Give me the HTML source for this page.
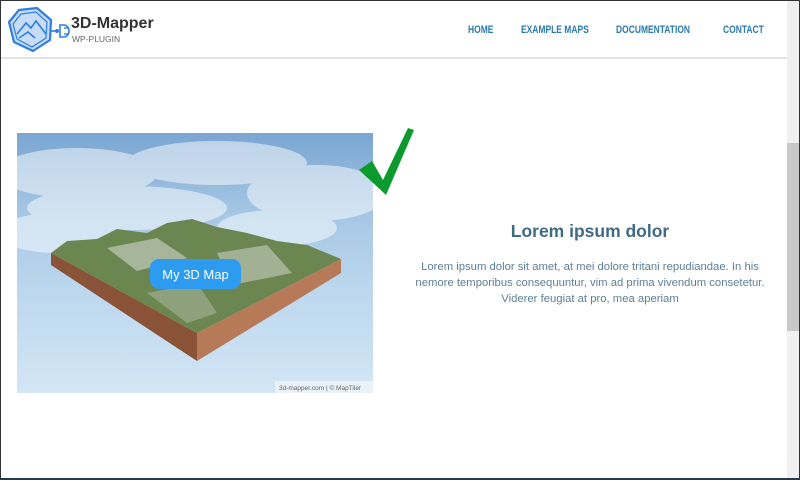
<!DOCTYPE html>
<html><head><meta charset="utf-8"><style>
*{margin:0;padding:0;box-sizing:border-box}
html,body{width:800px;height:480px;overflow:hidden;background:#fff;font-family:"Liberation Sans",sans-serif}
.frame{position:absolute;inset:0;border:1px solid #333;border-bottom:2px solid #2b3a4a}
.header{position:absolute;left:1px;top:1px;width:786px;height:58px;border-bottom:2px solid #e2e2e2;background:#fff}
.nav a{position:absolute;top:23px;font-size:11px;font-weight:bold;color:#2a7ab0;text-decoration:none;transform:scaleX(0.77);transform-origin:left;white-space:nowrap}
.sb{position:absolute;left:787px;top:1px;width:12px;height:477px;background:#f0f0f0}
.thumb{position:absolute;left:787px;top:143px;width:12px;height:188px;background:#c8c8c8}
.img{position:absolute;left:17px;top:133px;width:356px;height:260px;overflow:hidden;
background:linear-gradient(180deg,#7aa6d2 0%,#a4c6e4 30%,#bcd7ee 60%,#d3e6f5 100%)}
h2{position:absolute;left:400px;width:380px;top:221px;text-align:center;font-size:17.5px;font-weight:bold;color:#3f6a86}
p{position:absolute;left:405px;width:370px;top:259px;text-align:center;font-size:11.3px;line-height:16px;color:#5c7f96}
</style></head><body>
<div class="header">
<svg style="position:absolute;left:6px;top:6px" width="64" height="46" viewBox="0 0 64 46">
<polygon points="12,3 30,1 44,13 43,33 26,44 7,35 2,15" fill="#c6dbf5" stroke="#2e7fe0" stroke-width="2.2" stroke-linejoin="round"/>
<polygon points="14,7 29,5 40,15 39,31 25,40 10,32 6,17" fill="none" stroke="#2e7fe0" stroke-width="1.2"/>
<path d="M10,27 L19,16 L24,21 L29,14 L39,27 M12,31 L21,25 L28,31" fill="none" stroke="#2e7fe0" stroke-width="1.6"/>
<line x1="43" y1="24" x2="50" y2="24" stroke="#2e7fe0" stroke-width="1.6"/>
<circle cx="50" cy="24" r="2" fill="#2e7fe0"/>
<path d="M53,18 h4 a5,6 0 0 1 0,12 h-4 z" fill="none" stroke="#2e7fe0" stroke-width="1.6"/>
<line x1="57" y1="21" x2="62" y2="21" stroke="#2e7fe0" stroke-width="1.4"/>
<line x1="57" y1="27" x2="62" y2="27" stroke="#2e7fe0" stroke-width="1.4"/>
</svg>
<div style="position:absolute;left:70px;top:14px;font-size:16px;font-weight:bold;color:#333">3D-Mapper</div>
<div style="position:absolute;left:71px;top:33px;font-size:8.5px;color:#666">WP-PLUGIN</div>
<div class="nav">
<a style="left:467px">HOME</a>
<a style="left:520px">EXAMPLE MAPS</a>
<a style="left:615px">DOCUMENTATION</a>
<a style="left:722px">CONTACT</a>
</div>
</div>
<div class="sb"></div><div class="thumb"></div>
<div class="img">
<svg width="356" height="260" viewBox="0 0 356 260">
<g fill="#fff" opacity="0.5">
<ellipse cx="60" cy="40" rx="80" ry="25"/><ellipse cx="200" cy="30" rx="90" ry="22"/>
<ellipse cx="300" cy="60" rx="70" ry="28"/><ellipse cx="110" cy="75" rx="100" ry="22"/>
<ellipse cx="40" cy="100" rx="60" ry="20"/><ellipse cx="260" cy="95" rx="60" ry="18"/>
</g>
<polygon points="34,120 180,200 180,228 34,132" fill="#8a5236"/>
<polygon points="180,200 324,126 324,140 180,228" fill="#b77a58"/>
<polygon points="34,120 50,108 80,106 100,96 130,100 150,90 175,86 200,94 230,100 260,108 290,112 324,126 180,200" fill="#6b8650"/>
<polygon points="90,115 140,105 170,125 120,138" fill="#cfd6cb" opacity="0.6"/>
<polygon points="200,120 250,112 275,140 215,152" fill="#cfd6cb" opacity="0.55"/>
<polygon points="130,160 180,150 200,180 170,190" fill="#a7b39a" opacity="0.6"/>
<rect x="133" y="126" width="91" height="30" rx="9" fill="#2d9bf0"/>
<text x="178.5" y="146" text-anchor="middle" font-family="Liberation Sans,sans-serif" font-size="13" fill="#fff">My 3D Map</text>
<rect x="258" y="248" width="98" height="12" fill="#eef3f7" opacity="0.85"/>
<text x="262" y="257" font-family="Liberation Sans,sans-serif" font-size="6.5" fill="#666">3d-mapper.com | © MapTiler</text>
</svg>
</div>
<svg style="position:absolute;left:356px;top:125px" width="62" height="72" viewBox="0 0 62 72">
<path d="M3,45 L16,36 L27,55 L52,3 L58,5 L30,70 Z" fill="#0a9a2e"/>
</svg>
<h2>Lorem ipsum dolor</h2>
<p>Lorem ipsum dolor sit amet, at mei dolore tritani repudiandae. In his nemore temporibus consequuntur, vim ad prima vivendum consetetur. Viderer feugiat at pro, mea aperiam</p>
<div class="frame"></div>
</body></html>
